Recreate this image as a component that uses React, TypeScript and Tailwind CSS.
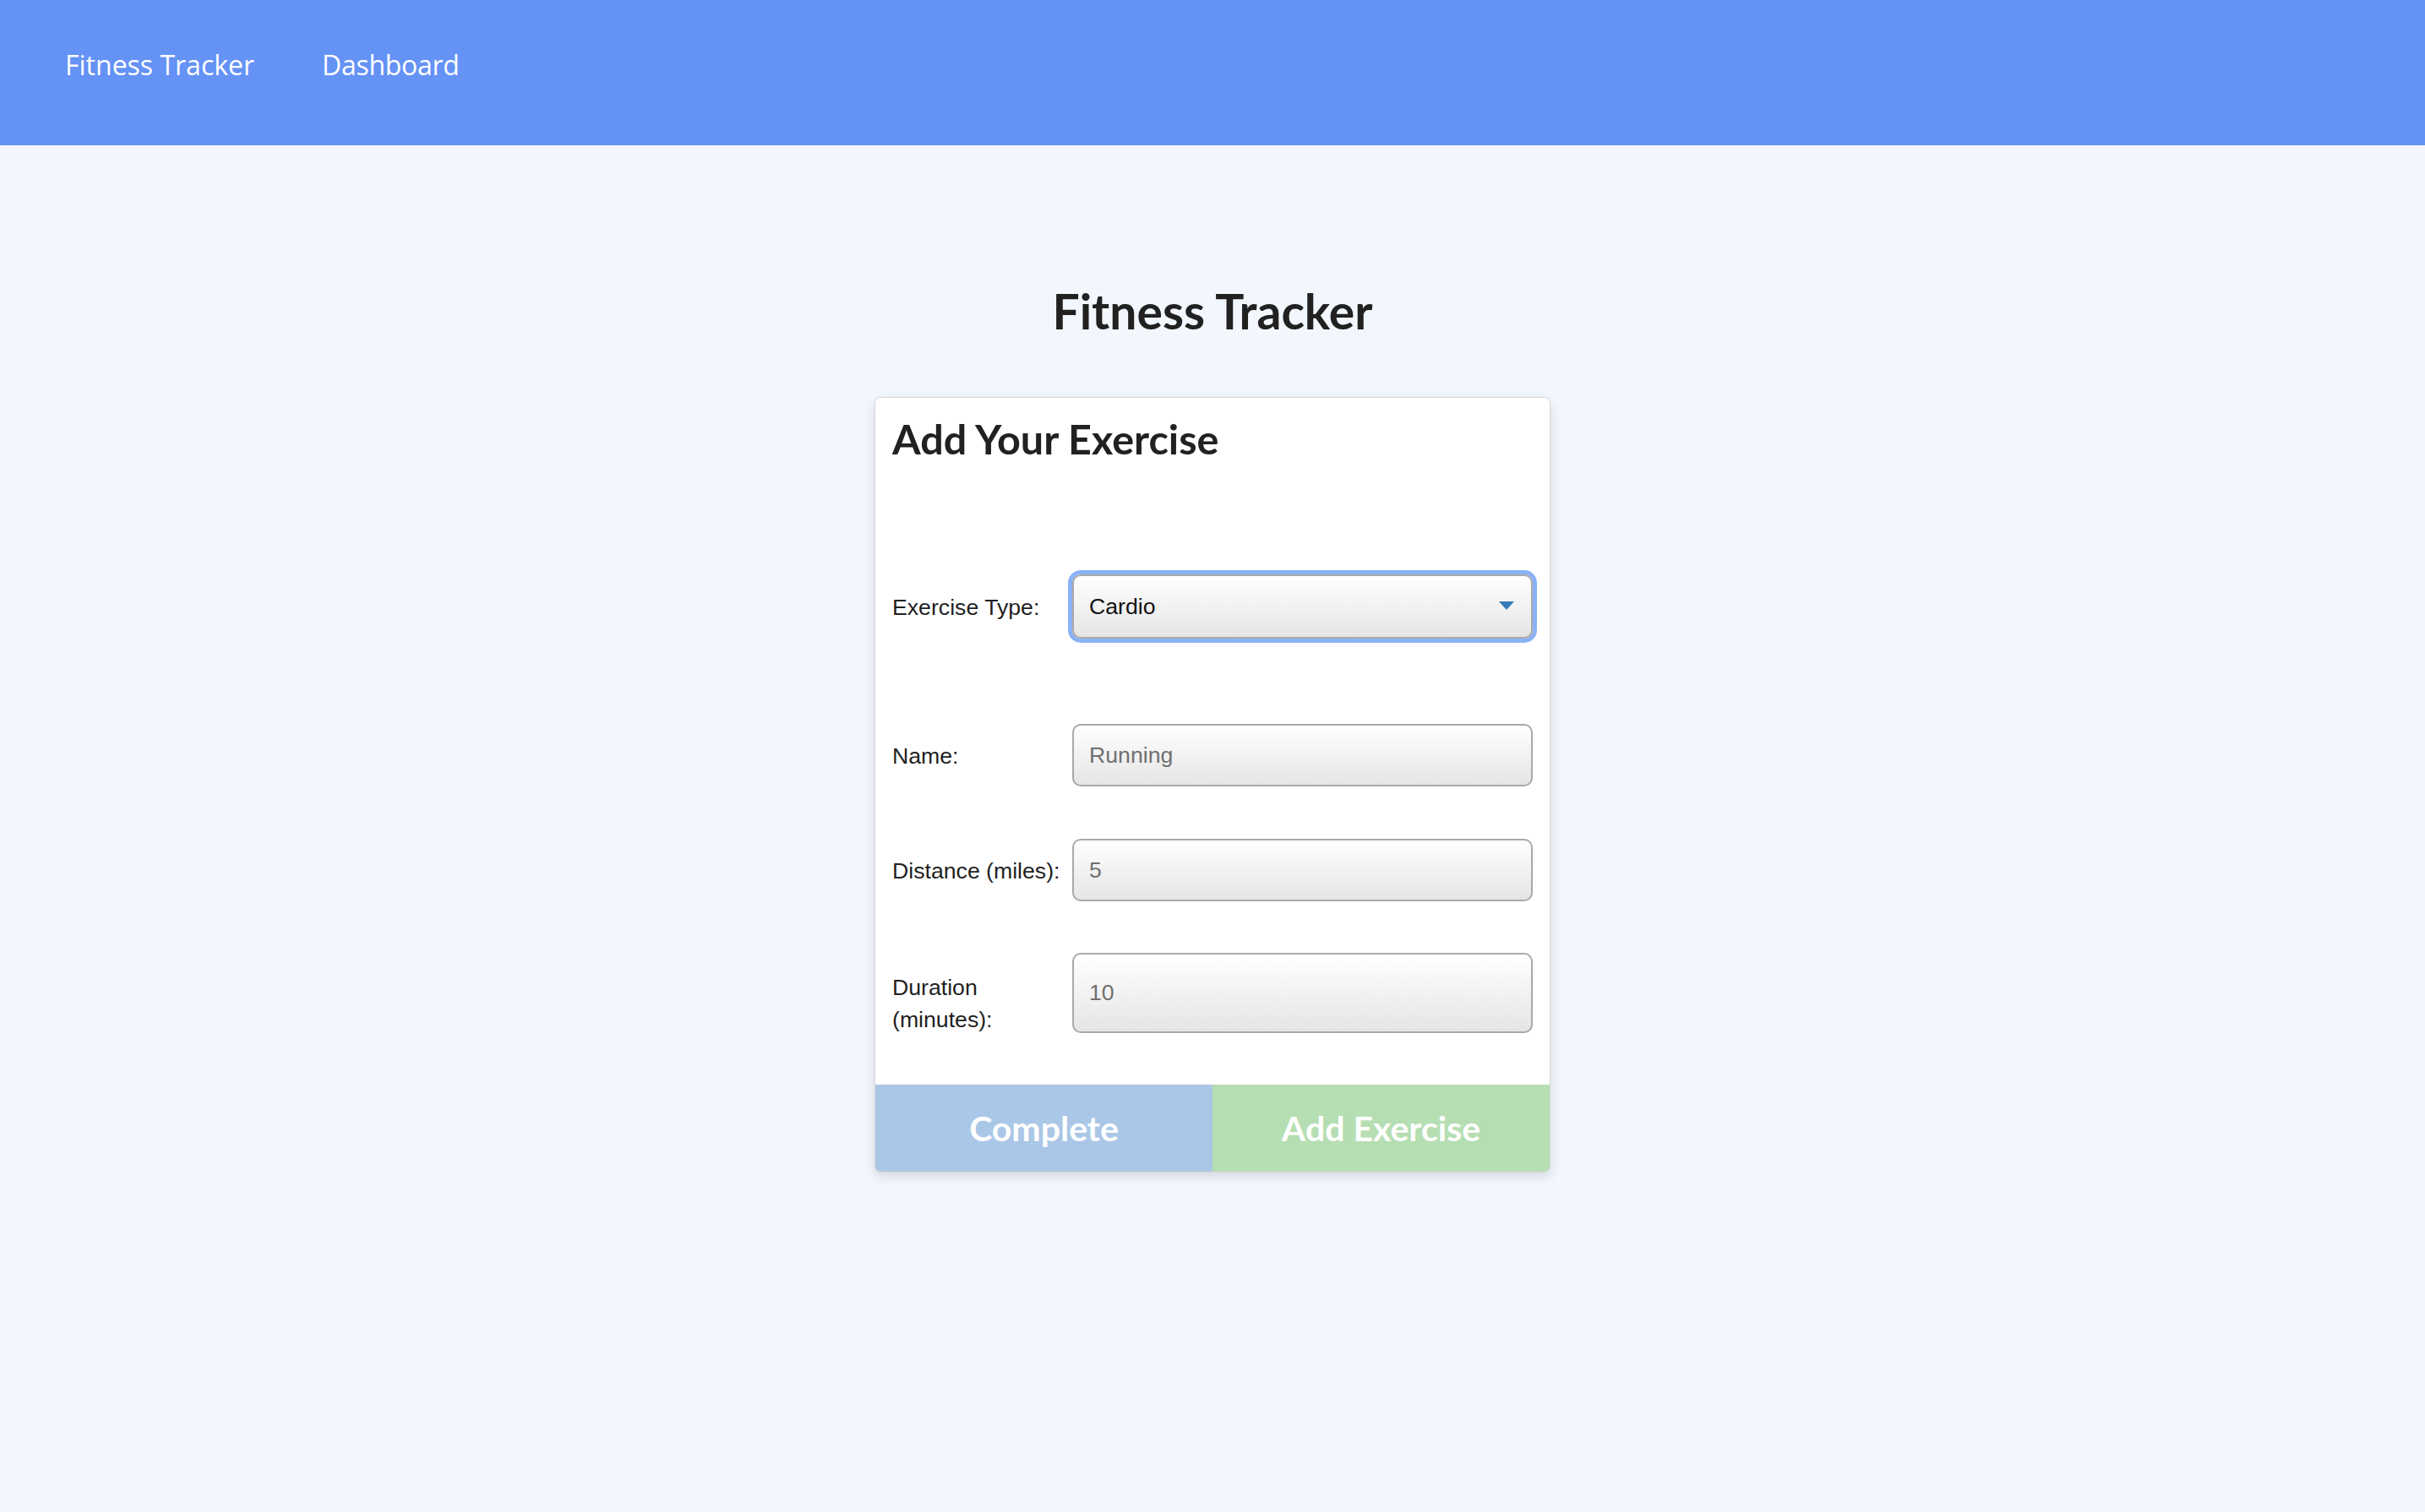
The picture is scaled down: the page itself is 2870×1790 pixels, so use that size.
import React from "react";

const labelFont = "font-['Liberation_Sans',Arial,sans-serif]";
const headFont = "font-['Lato',sans-serif]";

function Field({
  label,
  value,
  height,
  className = "",
  labelClass = "",
}: {
  label: React.ReactNode;
  value: string;
  height: string;
  className?: string;
  labelClass?: string;
}) {
  return (
    <div className={`flex items-center ${className}`}>
      <label
        className={`w-[213px] shrink-0 text-[26.67px] leading-[38px] text-[#1f1f1f] ${labelFont} ${labelClass}`}
      >
        {label}
      </label>
      <div
        className={`flex-1 ${height} flex items-center pl-[18px] border-2 border-[#a9a9a9] rounded-[10px] bg-gradient-to-b from-white to-[#e5e5e5] text-[26.67px] text-[#6f6f6f] ${labelFont}`}
      >
        {value}
      </div>
    </div>
  );
}

export default function App() {
  return (
    <div className="min-h-screen bg-[#f2f7fd]">
      <nav className="h-[172px] bg-[#6592f5] flex items-start pt-[61px] pl-[77px] gap-[80px] text-white text-[32px] leading-[1] font-['Open_Sans',sans-serif]">
        <a href="#">Fitness Tracker</a>
        <a href="#" className="tracking-[-0.3px]">Dashboard</a>
      </nav>

      <main className="flex flex-col items-center">
        <h1 className={`mt-[162px] text-[57px] leading-[1.2] font-bold text-[#212121] ${headFont}`}>
          Fitness Tracker
        </h1>

        <div className="mt-[68px] w-[800px] bg-white border border-[#d6d6d6] rounded-[7px] shadow-[0_5px_14px_rgba(0,0,0,0.12)] overflow-hidden">
          <div className="px-[20px] pt-[19px] pb-[61px]">
            <h2 className={`text-[48.5px] leading-[1.2] font-bold text-[#212121] ${headFont}`}>
              Add Your Exercise
            </h2>

            <div className="mt-[131px] flex items-center">
              <label
                className={`w-[213px] shrink-0 mt-[2px] text-[26.67px] leading-[38px] text-[#1f1f1f] ${labelFont}`}
              >
                Exercise Type:
              </label>
              <div
                className={`flex-1 h-[76px] flex items-center justify-between pl-[18px] pr-[20px] border-2 border-[#a9a9a9] rounded-[10px] bg-gradient-to-b from-white to-[#e5e5e5] shadow-[0_0_0_5px_#8ab3f6] text-[26.67px] text-[#111] ${labelFont}`}
              >
                <span>Cardio</span>
                <svg width="18" height="10" viewBox="0 0 18 10" className="mb-[2px]">
                  <polygon points="0,0 18,0 9,10" fill="#3579b6" />
                </svg>
              </div>
            </div>

            <Field label="Name:" value="Running" height="h-[74px]" className="mt-[101px]" labelClass="mt-[2px]" />
            <Field label="Distance (miles):" value="5" height="h-[74px]" className="mt-[62px]" labelClass="mt-[2px]" />
            <Field
              label={
                <>
                  Duration
                  <br />
                  (minutes):
                </>
              }
              value="10"
              height="h-[95px]"
              className="mt-[61px]"
              labelClass="translate-y-[13px]"
            />
          </div>

          <div className={`flex h-[103px] text-white text-[41px] font-bold ${headFont}`}>
            <button className="flex-1 bg-[#aac7e7] flex items-center justify-center pt-[2px]">Complete</button>
            <button className="flex-1 bg-[#b5deb2] flex items-center justify-center pt-[2px]">Add Exercise</button>
          </div>
        </div>
      </main>
    </div>
  );
}
